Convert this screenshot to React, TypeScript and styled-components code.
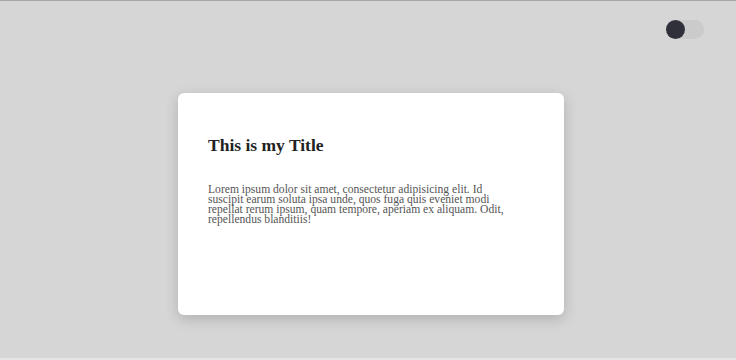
import styled, { createGlobalStyle } from "styled-components";

const GlobalStyle = createGlobalStyle`
  html, body {
    margin: 0;
    padding: 0;
    background: #d6d6d6;
  }
  #root {
    min-height: 360px;
  }
`;

const Page = styled.div`
  height: 360px;
  box-sizing: border-box;
  border-top: 1px solid #a6a6a6;
  border-bottom: 2px solid #e4e4e4;
  background: #d6d6d6;
  display: flex;
  flex-direction: column;
  padding: 19px 32px 0 0;
  font-family: "Liberation Serif", "Times New Roman", serif;
`;

const ToggleRow = styled.div`
  display: flex;
  justify-content: flex-end;
`;

const Track = styled.button<{ $on: boolean }>`
  width: 38px;
  height: 19px;
  border: none;
  padding: 0;
  border-radius: 10px;
  background: ${(p) => (p.$on ? "#3a3a44" : "#cbcbcb")};
  display: flex;
  justify-content: ${(p) => (p.$on ? "flex-end" : "flex-start")};
  align-items: center;
  cursor: pointer;
`;

const Knob = styled.span`
  width: 19px;
  height: 19px;
  border-radius: 50%;
  background: #2f303a;
`;

const Stage = styled.div`
  display: flex;
  justify-content: center;
  padding-left: 38px;
  margin-top: 54px;
`;

const Card = styled.div`
  width: 386px;
  height: 222px;
  box-sizing: border-box;
  background: #fff;
  border-radius: 6px;
  box-shadow: 0 4px 14px rgba(0, 0, 0, 0.18);
  padding: 40px 30px;
`;

const Title = styled.h2`
  margin: 0 0 28px;
  font-size: 17.5px;
  font-weight: bold;
  color: #222;
  line-height: 24px;
`;

const Body = styled.p`
  margin: 0;
  max-width: 300px;
  font-size: 11.6px;
  line-height: 10px;
  color: #555;
`;

const App = () => (
  <>
    <GlobalStyle />
    <Page>
      <ToggleRow>
        <Track $on={false} aria-label="toggle">
          <Knob />
        </Track>
      </ToggleRow>
      <Stage>
        <Card>
          <Title>This is my Title</Title>
          <Body>
            Lorem ipsum dolor sit amet, consectetur adipisicing elit. Id
            suscipit earum soluta ipsa unde, quos fuga quis eveniet modi
            repellat rerum ipsum, quam tempore, aperiam ex aliquam. Odit,
            repellendus blanditiis!
          </Body>
        </Card>
      </Stage>
    </Page>
  </>
);

export default App;
